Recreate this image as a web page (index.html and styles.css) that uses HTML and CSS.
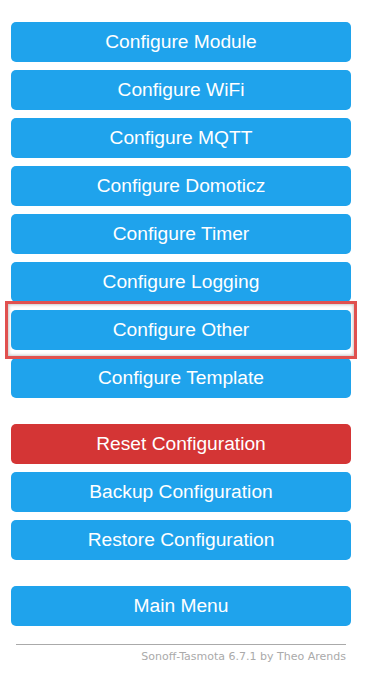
FILE: index.html
```html
<!DOCTYPE html>
<html lang="en">
<head>
    <meta charset="UTF-8">
    <meta name="viewport" content="width=device-width, initial-scale=1.0">
    <title>Sonoff-Tasmota - Configuration</title>
    <link rel="stylesheet" href="styles.css">
</head>
<body>
    <div class="main">
        <div class="group">
            <button class="btn">Configure Module</button>
            <button class="btn">Configure WiFi</button>
            <button class="btn">Configure MQTT</button>
            <button class="btn">Configure Domoticz</button>
            <button class="btn">Configure Timer</button>
            <button class="btn">Configure Logging</button>
            <div class="marked">
                <button class="btn">Configure Other</button>
                <span class="mark"></span>
            </div>
            <button class="btn">Configure Template</button>
        </div>
        <div class="group">
            <button class="btn btn-red">Reset Configuration</button>
            <button class="btn">Backup Configuration</button>
            <button class="btn">Restore Configuration</button>
        </div>
        <div class="group">
            <button class="btn">Main Menu</button>
        </div>
        <hr class="line">
        <div class="footer">Sonoff-Tasmota 6.7.1 by Theo Arends</div>
    </div>
</body>
</html>
```

FILE: styles.css
```css
body{
    margin:0;
    background:#fff;
}
.main{
    padding: 22px 14px 0 11px;
    display:flex;
    flex-direction:column;
    gap:26px;
}
.group{
    display:flex;
    flex-direction:column;
    gap:8px;
}
.btn{
    display:block;
    width:100%;
    height:40px;
    border:0;
    border-radius:5px;
    background:#1fa3ec;   /* tasmota blue */
    color:#fff;
    font-family:"Liberation Sans", Arial, sans-serif;
    font-size:19.2px;
    padding:0;
    cursor:pointer;
}
.btn-red{
    background:#d43535;
}
.marked{
    position:relative;
}
/* red highlight round "Configure Other" */
.mark{
    position:absolute;
    left:-6px;
    right:-6px;
    top:-9px;
    bottom:-9px;
    border:3px solid #e0514f;
    box-shadow: inset 0 0 3px 1px #c8c8c8;
    box-sizing:border-box;
    pointer-events:none;
}
.line{
    margin:-8px 5px 0 5px;
    border:0;
    border-top:1px solid #aaa;
    height:0;
}
.footer{
    margin-top:-21px;
    text-align:right;
    padding-right:5px;
    font-family:"DejaVu Sans", Verdana, sans-serif;
    font-size:11px;
    color:#aaa;
}
```
